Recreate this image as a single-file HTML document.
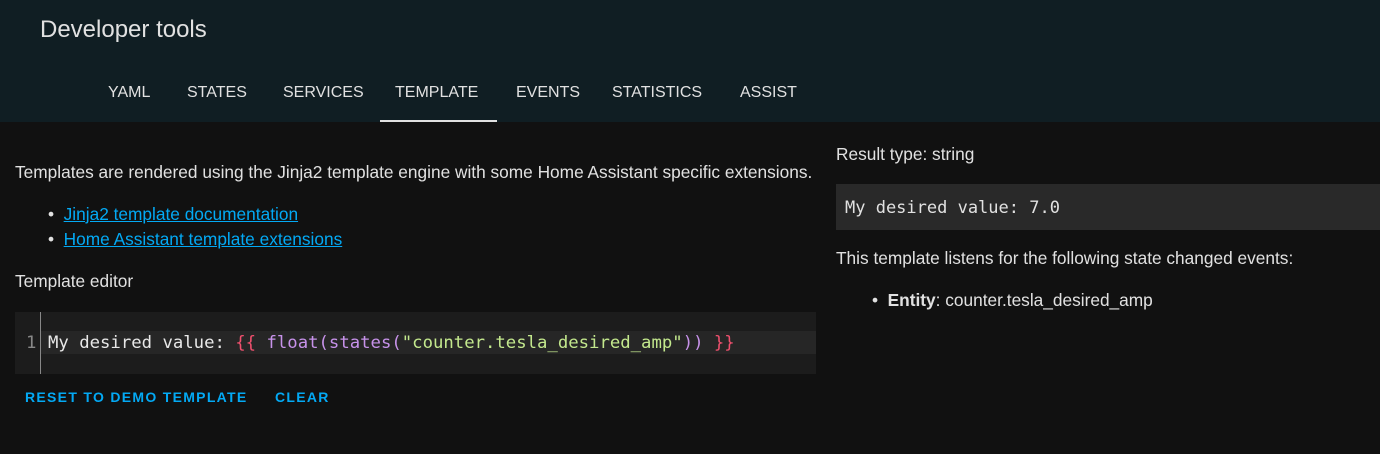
<!DOCTYPE html>
<html><head><style>
body{margin:0;width:1380px;height:454px;background:#111111;font-family:"Liberation Sans",sans-serif;color:#e1e1e1;position:relative;overflow:hidden}
.hdr{position:absolute;left:0;top:0;width:1380px;height:122px;background:#101e23}
.title{position:absolute;left:40px;top:16px;font-size:24px;color:#e1e1e1}
.tab{position:absolute;top:84px;font-size:16px;color:#e1e1e1;letter-spacing:0}
.ul{position:absolute;left:380px;top:120px;width:117px;height:2px;background:#e1e1e1}
.t{position:absolute;font-size:17.3px}
a{color:#03a9f4;text-decoration:underline}
.ed{position:absolute;left:15px;top:312px;width:801px;height:62px;background:#1c1c1c}
.gut{position:absolute;left:40px;top:312px;width:1px;height:62px;background:#888}
.al{position:absolute;left:41px;top:331px;width:775px;height:23px;background:#262626}
.code{position:absolute;top:333px;font-family:"DejaVu Sans Mono","Liberation Mono",monospace;font-size:17.3px;white-space:pre}
.btn{position:absolute;top:389px;font-size:14px;color:#03a9f4;letter-spacing:1.3px;font-weight:bold}
.res{position:absolute;left:836px;top:184px;width:544px;height:46px;background:#292929}
</style></head><body>
<div class="hdr"></div>
<div class="title">Developer tools</div>
<div class="tab" style="left:108px">YAML</div>
<div class="tab" style="left:187px">STATES</div>
<div class="tab" style="left:283px">SERVICES</div>
<div class="tab" style="left:395px">TEMPLATE</div>
<div class="tab" style="left:516px">EVENTS</div>
<div class="tab" style="left:612px">STATISTICS</div>
<div class="tab" style="left:740px">ASSIST</div>
<div class="ul"></div>
<div class="t" style="left:15px;top:162px">Templates are rendered using the Jinja2 template engine with some Home Assistant specific extensions.</div>
<div class="t" style="left:48px;top:204px">•&nbsp; <a>Jinja2 template documentation</a></div>
<div class="t" style="left:48px;top:229px">•&nbsp; <a>Home Assistant template extensions</a></div>
<div class="t" style="left:15px;top:271px">Template editor</div>
<div class="ed"></div><div class="al"></div><div class="gut"></div>
<div class="code" style="left:26px;color:#888">1</div>
<div class="code" style="left:48px;color:#e8e8e8">My desired value: <span style="color:#f0506e">{{</span> <span style="color:#c792ea">float(states(</span><span style="color:#c3e88d">"counter.tesla_desired_amp"</span><span style="color:#c792ea">))</span> <span style="color:#f0506e">}}</span></div>
<div class="btn" style="left:25px">RESET TO DEMO TEMPLATE</div>
<div class="btn" style="left:275px">CLEAR</div>
<div class="t" style="left:836px;top:144px">Result type: string</div>
<div class="res"></div>
<div class="code" style="left:845px;top:198px;color:#e1e1e1;font-size:17px">My desired value: 7.0</div>
<div class="t" style="left:836px;top:248px">This template listens for the following state changed events:</div>
<div class="t" style="left:872px;top:290px">•&nbsp; <b>Entity</b>: counter.tesla_desired_amp</div>
</body></html>
